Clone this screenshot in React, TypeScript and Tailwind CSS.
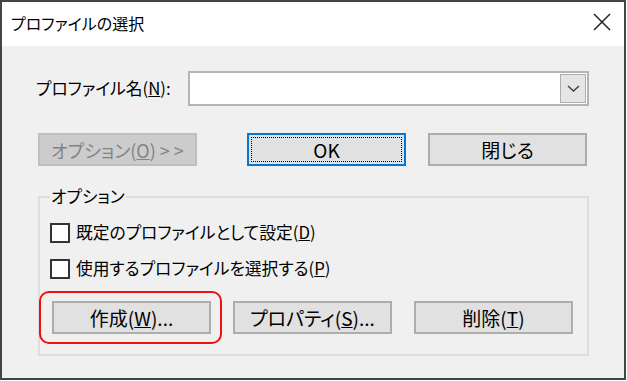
import React from "react";

const font = { fontFamily: '"Noto Sans CJK JP", "Noto Sans", sans-serif' };

function Btn({ children, className = "" }: { children: React.ReactNode; className?: string }) {
  return (
    <div
      className={`w-[159px] h-[33px] border-2 border-[#adadad] bg-[#e1e1e1] flex items-center justify-center text-[19px] leading-none text-black ${className}`}
    >
      {children}
    </div>
  );
}

function Check({ children }: { children: React.ReactNode }) {
  return (
    <div className="flex items-center h-[21px]">
      <div className="w-[20px] h-[20px] border-2 border-[#333333] bg-white" />
      <span className="ml-[6px] text-[16.75px] leading-none text-black">{children}</span>
    </div>
  );
}

export default function App() {
  return (
    <div className="w-[627px] h-[381px] bg-white [font-feature-settings:'palt']" style={font}>
      <div className="w-[626px] h-[380px] border-2 border-[#444444] bg-[#f0f0f0] flex flex-col">
        <div className="h-[44px] bg-white flex items-center justify-between pl-[9px] pr-[13px] shrink-0">
          <span className="text-[16px] leading-none text-black pb-[3px]">プロファイルの選択</span>
          <svg width="18" height="18" viewBox="0 0 18 18" className="mb-[4px]">
            <path d="M1 1 L17 17 M17 1 L1 17" stroke="#222" strokeWidth="1.5" fill="none" />
          </svg>
        </div>

        <div className="flex flex-col">
          <div className="flex items-center mt-[25px] ml-[34px] h-[35px]">
            <div className="w-[152px] text-[16.75px] leading-none text-black">
              プロファイル名(<span className="underline">N</span>):
            </div>
            <div className="w-[401px] h-[35px] border-2 border-[#b4b4b4] bg-white flex items-center justify-end pr-[1px]">
              <div className="w-[26px] h-[29px] border-[1.5px] border-[#adadad] bg-[#e5e5e5] flex items-center justify-center">
                <svg width="13" height="7" viewBox="0 0 13 7">
                  <path d="M1 1 L6.5 6 L12 1" stroke="#444" strokeWidth="1.5" fill="none" />
                </svg>
              </div>
            </div>
          </div>

          <div className="flex mt-[27px] ml-[36px]">
            <div className="w-[159px] h-[33px] border-2 border-[#bfbfbf] bg-[#cccccc] flex items-center justify-center text-[18px] leading-none text-[#838383]">
              オプション(<span className="underline">O</span>) &gt; &gt;
            </div>
            <div className="ml-[50px] w-[159px] h-[33px] border-2 border-[#0078d7] bg-[#e1e1e1] p-[2px]">
              <div className="w-full h-full border border-dotted border-black flex items-center justify-center text-[19px] leading-none text-black">
                OK
              </div>
            </div>
            <Btn className="ml-[22px]">閉じる</Btn>
          </div>

          <div className="relative mt-[30px] ml-[36px] w-[551px] h-[160px] border-2 border-[#dedede] pl-[10px] pt-[24px]">
            <span className="absolute top-[-10px] left-[10px] bg-[#f0f0f0] px-[1px] text-[16.75px] leading-none text-black">
              オプション
            </span>
            <Check>
              既定のプロファイルとして設定(<span className="underline">D</span>)
            </Check>
            <div className="mt-[15px]">
              <Check>
                使用するプロファイルを選択する(<span className="underline">P</span>)
              </Check>
            </div>
            <div className="flex mt-[22px] ml-[2px]">
              <Btn>
                作成(<span className="underline">W</span>)...
              </Btn>
              <Btn className="ml-[22px]">
                プロパティ(<span className="underline">S</span>)...
              </Btn>
              <Btn className="ml-[22px]">
                削除(<span className="underline">T</span>)
              </Btn>
            </div>
            <div className="absolute left-[-1px] top-[93px] w-[183px] h-[53px] border-2 border-[#ee1111] rounded-[10px] pointer-events-none" />
          </div>
        </div>
      </div>
    </div>
  );
}
